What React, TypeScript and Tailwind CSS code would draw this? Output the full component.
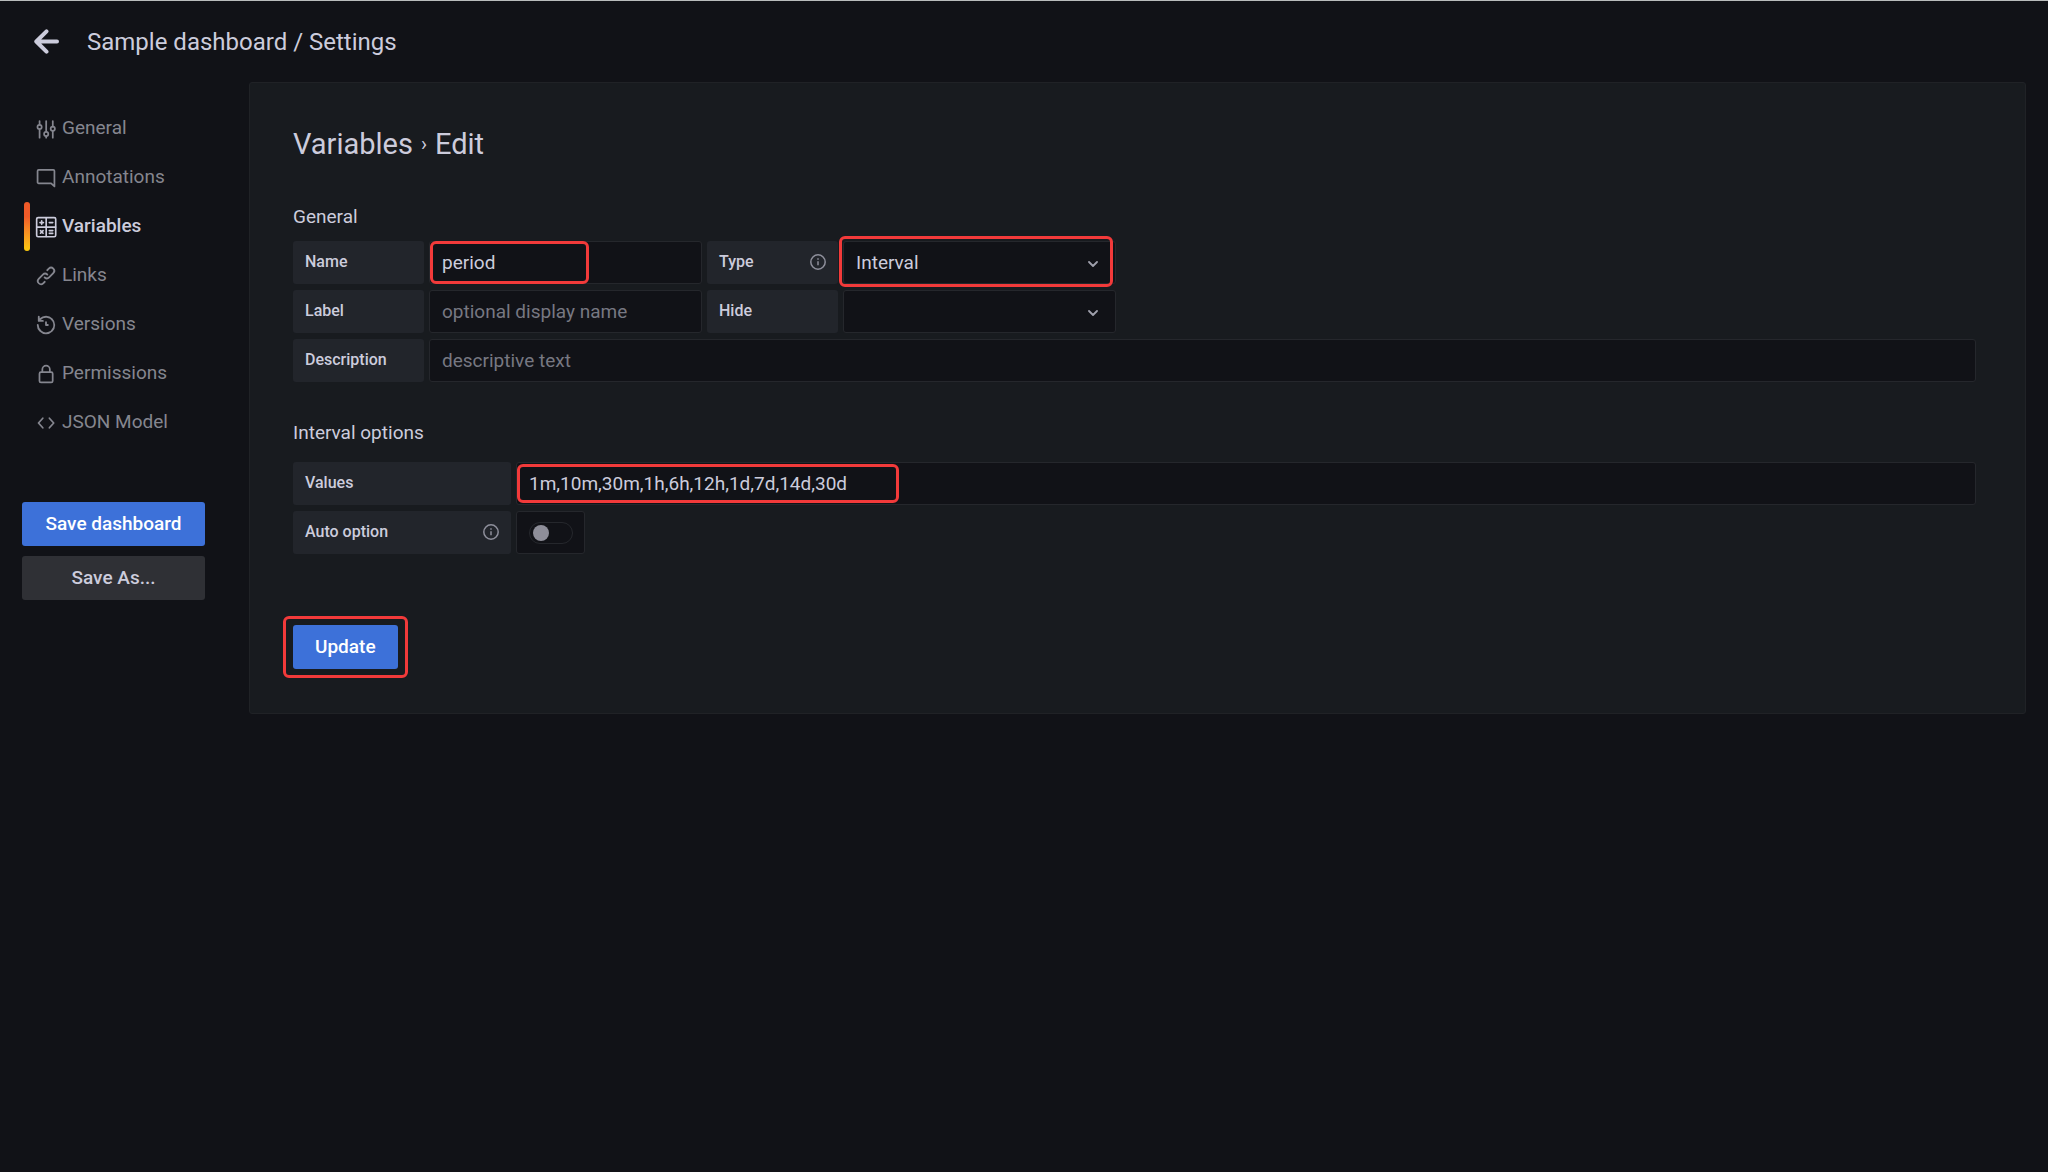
import { useState } from "react";
import type { ReactNode } from "react";
import clsx from "clsx";

const navItems = [
  { label: "General", icon: "sliders" },
  { label: "Annotations", icon: "comment" },
  { label: "Variables", icon: "calculator" },
  { label: "Links", icon: "link" },
  { label: "Versions", icon: "history" },
  { label: "Permissions", icon: "lock" },
  { label: "JSON Model", icon: "brackets" },
];

const icons: Record<string, ReactNode> = {
  sliders: (
    <g fill="none" stroke="currentColor" strokeWidth="1.9" strokeLinecap="round">
      <path d="M5 3.3v4M5 12v9.500M12.2 3.300v11.500M12.2 19.900v1.600M19.400 3.300v6M19.400 14v7.500" />
      <circle cx="5" cy="9.700" r="2.300" />
      <circle cx="12.200" cy="17.500" r="2.300" />
      <circle cx="19.400" cy="11.700" r="2.300" />
    </g>
  ),
  comment: (
    <path
      d="M21.2 21.2l-3.6-3.4H4a1.2 1.2 0 0 1-1.2-1.2V4.4A1.2 1.2 0 0 1 4 3.200h16a1.200 1.200 0 0 1 1.200 1.200z"
      fill="none"
      stroke="currentColor"
      strokeWidth="1.9"
      strokeLinejoin="round"
    />
  ),
  calculator: (
    <g fill="none" stroke="currentColor" strokeWidth="1.8" strokeLinecap="round">
      <rect x="1.8" y="1.8" width="20.8" height="20.8" rx="1.6" />
      <path d="M12.2 2v20.4M2 12.2h20.4" />
      <path d="M5.4 7.2h3.8M7.3 5.3v3.8M15.6 7.2h3.8M6 16l2.8 2.8M8.8 16L6 18.8M15.6 15.9h3.8M15.6 18.9h3.8" />
    </g>
  ),
  link: (
    <path
      fill="currentColor"
      d="M10,17.55,8.23,19.27a2.47,2.47,0,0,1-3.5-3.5l4.54-4.55a2.46,2.46,0,0,1,3.39-.09l.12.1a1,1,0,0,0,1.4-1.43A2.75,2.75,0,0,0,14,9.59a4.46,4.46,0,0,0-6.09.22L3.31,14.36a4.48,4.48,0,0,0,6.33,6.33L11.37,19A1,1,0,0,0,10,17.55ZM20.69,3.31a4.49,4.49,0,0,0-6.33,0L12.63,5A1,1,0,0,0,14,6.45l1.73-1.72a2.47,2.47,0,0,1,3.5,3.5l-4.54,4.55a2.46,2.46,0,0,1-3.39.09l-.12-.1a1,1,0,0,0-1.4,1.43,2.75,2.75,0,0,0,.23.21,4.47,4.47,0,0,0,6.09-.22l4.55-4.55A4.49,4.49,0,0,0,20.69,3.31Z"
    />
  ),
  history: (
    <path
      fill="currentColor"
      d="M12,2A10,10,0,0,0,5.12,4.77V3a1,1,0,0,0-2,0V7.5a1,1,0,0,0,1,1H8.62a1,1,0,0,0,0-2H6.22A8,8,0,1,1,4,12a1,1,0,0,0-2,0A10,10,0,1,0,12,2Zm0,6a1,1,0,0,0-1,1v3a1,1,0,0,0,1,1h2a1,1,0,0,0,0-2H13V9A1,1,0,0,0,12,8Z"
    />
  ),
  lock: (
    <g fill="none" stroke="currentColor" strokeWidth="1.9">
      <rect x="4.9" y="10" width="14.4" height="11.2" rx="1.6" />
      <path d="M8 10V7a4.1 4.1 0 0 1 8.2 0v3" />
    </g>
  ),
  brackets: (
    <path
      d="M8.5 6.8L3.8 12l4.7 5.2M15.7 6.8l4.7 5.2-4.7 5.2"
      fill="none"
      stroke="currentColor"
      strokeWidth="1.9"
      strokeLinecap="round"
      strokeLinejoin="round"
    />
  ),
};

function InfoIcon() {
  return (
    <svg viewBox="0 0 16 16" className="size-4 shrink-0 text-[#8e8f9b]" fill="none" stroke="currentColor" strokeWidth="1.5">
      <circle cx="8" cy="8" r="7.2" />
      <path d="M8 7.3v4M8 4.2v1.5" />
    </svg>
  );
}

// Red frame drawn over the spot the reader should look at
function Highlight({ className }: { className: string }) {
  return <span className={clsx("pointer-events-none absolute rounded-md border-[3px] border-[#f23a3a]", className)} />;
}

function FieldLabel({ htmlFor, children, wide, info }: { htmlFor: string; children: string; wide?: boolean; info?: boolean }) {
  return (
    <label
      htmlFor={htmlFor}
      className={clsx(
        "flex h-[43px] shrink-0 items-center justify-between rounded-[3px] bg-[#22252b] px-3 pb-[2px] text-base font-medium",
        wide ? "w-[218px]" : "w-[131px]"
      )}
    >
      {children}
      {info && <InfoIcon />}
    </label>
  );
}

const fieldClass =
  "h-[43px] w-full rounded-[3px] border border-[#25272c] bg-[#111217] px-3 text-[19px] text-[#ccccdc] outline-none placeholder:text-[#777882]";

function SelectField({ id, options, highlight }: { id: string; options: string[]; highlight?: boolean }) {
  return (
    <div className="relative w-[273px]">
      <select id={id} className={clsx(fieldClass, "appearance-none pt-[2px]")}>
        {options.map((option) => (
          <option key={option}>{option}</option>
        ))}
      </select>
      <svg
        viewBox="0 0 10 6"
        className="pointer-events-none absolute top-5 right-[18px] h-[6px] w-[10px] text-[#9fa0ac]"
        fill="none"
        stroke="currentColor"
        strokeWidth="1.8"
        strokeLinecap="round"
        strokeLinejoin="round"
      >
        <path d="M1 1l4 4 4-4" />
      </svg>
      {highlight && <Highlight className="-top-[5px] right-[3px] -bottom-[3px] -left-1" />}
    </div>
  );
}

export default function App() {
  const [active, setActive] = useState("Variables");
  const [name, setName] = useState("period");
  const [values, setValues] = useState("1m,10m,30m,1h,6h,12h,1d,7d,14d,30d");

  return (
    <div className="min-h-screen border-t border-[#b9bcbc] bg-[#111217] font-['Roboto',sans-serif] text-[#ccccdc]">
      <header className="flex h-[81px] items-center gap-7 pl-[34px]">
        <button aria-label="Go back">
          <svg viewBox="0 0 25 25" className="size-[25px]" fill="none" stroke="currentColor" strokeWidth="4" strokeLinecap="round" strokeLinejoin="round">
            <path d="M12.5 2.3L2.3 12.5l10.2 10.2M3 12.5h20" />
          </svg>
        </button>
        <h1 className="text-2xl">Sample dashboard / Settings</h1>
      </header>

      <div className="flex items-start pr-[22px]">
        {/* Settings sidebar */}
        <aside className="w-[249px] shrink-0 pt-[22px] pr-11 pl-[22px]">
          <nav className="flex flex-col">
            {navItems.map((item) => (
              <a
                key={item.label}
                href="#"
                onClick={() => setActive(item.label)}
                className={clsx(
                  "relative flex h-[49px] items-center gap-[5px] pl-[13px] text-[19px]",
                  active === item.label ? "font-medium" : "text-[#85868f]"
                )}
              >
                {active === item.label && (
                  <span className="absolute inset-y-0 left-[2px] w-[6px] rounded-[3px] bg-linear-to-b from-[#f05a28] from-30% to-[#fbca0a]" />
                )}
                <svg viewBox="0 0 24 24" className="size-[22px] shrink-0">
                  {icons[item.icon]}
                </svg>
                {item.label}
              </a>
            ))}
          </nav>
          <div className="mt-[55px] flex flex-col gap-[10px]">
            <button className="h-11 rounded-[3px] bg-[#3d71d9] text-[19px] font-medium text-white">Save dashboard</button>
            <button className="h-11 rounded-[3px] bg-[#2f3035] text-[19px] font-medium">Save As...</button>
          </div>
        </aside>

        {/* Variable editor */}
        <main className="min-w-0 flex-1 rounded-[3px] border border-[#202226] bg-[#181b1f] py-11 pr-[49px] pl-[43px]">
          <h2 className="flex items-center gap-2 text-[29px] leading-[34px]">
            Variables <span className="text-xl">›</span> Edit
          </h2>

          <form onSubmit={(e) => e.preventDefault()}>
            <h3 className="mt-11 text-[19px] leading-6">General</h3>
            <div className="mt-3 flex flex-col gap-[6px]">
              <div className="flex gap-[5px]">
                <FieldLabel htmlFor="name">Name</FieldLabel>
                <div className="relative w-[273px]">
                  <input id="name" value={name} onChange={(e) => setName(e.target.value)} className={fieldClass} />
                  <Highlight className="inset-y-0 left-px w-[159px]" />
                </div>
                <FieldLabel htmlFor="type" info>
                  Type
                </FieldLabel>
                <SelectField id="type" options={["Interval", "Query", "Custom", "Constant"]} highlight />
              </div>
              <div className="flex gap-[5px]">
                <FieldLabel htmlFor="label">Label</FieldLabel>
                <div className="w-[273px]">
                  <input id="label" placeholder="optional display name" className={fieldClass} />
                </div>
                <FieldLabel htmlFor="hide">Hide</FieldLabel>
                <SelectField id="hide" options={["", "Label", "Variable"]} />
              </div>
              <div className="flex gap-[5px]">
                <FieldLabel htmlFor="description">Description</FieldLabel>
                <input id="description" placeholder="descriptive text" className={fieldClass} />
              </div>
            </div>

            <h3 className="mt-[39px] text-[19px] leading-6">Interval options</h3>
            <div className="mt-[17px] flex flex-col gap-[6px]">
              <div className="flex gap-[5px]">
                <FieldLabel htmlFor="values" wide>
                  Values
                </FieldLabel>
                <div className="relative flex-1">
                  <input id="values" value={values} onChange={(e) => setValues(e.target.value)} className={fieldClass} />
                  <Highlight className="inset-y-[2px] left-px w-[382px]" />
                </div>
              </div>
              <div className="flex gap-[5px]">
                <FieldLabel htmlFor="auto" wide info>
                  Auto option
                </FieldLabel>
                <div className="flex h-[43px] w-[69px] items-center justify-center rounded-[3px] border border-[#25272c] bg-[#111217]">
                  <input
                    id="auto"
                    type="checkbox"
                    role="switch"
                    className="flex h-[22px] w-11 appearance-none items-center rounded-full border border-[#25272c] px-[3px] before:size-4 before:rounded-full before:bg-[#8e8e99] checked:justify-end checked:bg-[#3d71d9]"
                  />
                </div>
              </div>
            </div>

            <div className="relative mt-[71px] w-fit">
              <button type="submit" className="block h-11 rounded-[3px] bg-[#3d71d9] px-[22px] text-[19px] font-medium text-white">
                Update
              </button>
              <Highlight className="-inset-x-[10px] -inset-y-[9px]" />
            </div>
          </form>
        </main>
      </div>
    </div>
  );
}
